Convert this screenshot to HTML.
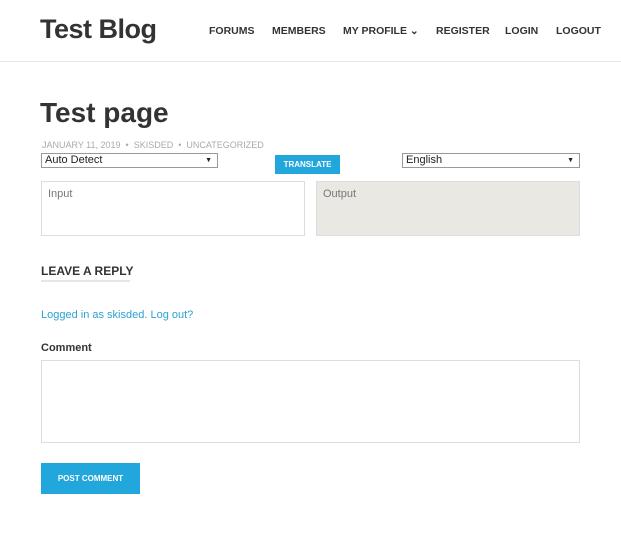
<!DOCTYPE html>
<html><head><meta charset="utf-8"><style>
*{margin:0;padding:0;box-sizing:border-box}
body{width:621px;height:536px;background:#fff;font-family:"Liberation Sans",sans-serif;position:relative;overflow:hidden;color:#333}
.a{position:absolute;white-space:nowrap}
.nav{font-size:10.5px;font-weight:bold;color:#333;top:25px}
.box{position:absolute;border:1px solid #ddd}
</style></head><body>
<div class="a" style="left:40px;top:14px;font-size:27px;font-weight:bold;color:#333;letter-spacing:-0.5px">Test Blog</div>
<div class="a nav" style="left:209px">FORUMS</div>
<div class="a nav" style="left:272px">MEMBERS</div>
<div class="a nav" style="left:343px">MY PROFILE ⌄</div>
<div class="a nav" style="left:436px">REGISTER</div>
<div class="a nav" style="left:505px">LOGIN</div>
<div class="a nav" style="left:556px">LOGOUT</div>
<div style="position:absolute;left:0;top:61px;width:621px;height:1px;background:#e6e6e6"></div>
<div class="a" style="left:40px;top:97px;font-size:28px;font-weight:bold;color:#333">Test page</div>
<div class="a" style="left:42px;top:140px;font-size:9px;color:#aaa">JANUARY 11, 2019 &nbsp;•&nbsp; SKISDED &nbsp;•&nbsp; UNCATEGORIZED</div>
<div class="box" style="left:41px;top:153px;width:177px;height:15px;border-color:#999;font-size:11px;padding-left:3px;line-height:13px;color:#222">Auto Detect<span style="position:absolute;right:5px;font-size:7px">▼</span></div>
<div class="a" style="left:275px;top:155px;width:65px;height:19px;background:#22a7dc;color:#fff;font-size:8px;font-weight:bold;text-align:center;line-height:19px">TRANSLATE</div>
<div class="box" style="left:402px;top:153px;width:178px;height:15px;border-color:#999;font-size:11px;padding-left:3px;line-height:13px;color:#222">English<span style="position:absolute;right:5px;font-size:7px">▼</span></div>
<div class="box" style="left:41px;top:181px;width:264px;height:55px;font-size:11px;color:#777;padding:6px 6px">Input</div>
<div class="box" style="left:316px;top:181px;width:264px;height:55px;background:#e9e8e3;font-size:11px;color:#777;padding:6px 6px">Output</div>
<div class="a" style="left:41px;top:264px;font-size:12px;font-weight:bold;color:#333">LEAVE A REPLY</div>
<div style="position:absolute;left:41px;top:280px;width:89px;height:2px;background:#e6e6e6"></div>
<div class="a" style="left:41px;top:309px;font-size:11px;color:#2aa3d2">Logged in as skisded. Log out?</div>
<div class="a" style="left:41px;top:342px;font-size:11px;font-weight:bold;color:#333">Comment</div>
<div class="box" style="left:41px;top:360px;width:539px;height:83px"></div>
<div class="a" style="left:41px;top:463px;width:99px;height:31px;background:#22a7dc;color:#fff;font-size:8px;font-weight:bold;text-align:center;line-height:31px">POST COMMENT</div>
</body></html>
